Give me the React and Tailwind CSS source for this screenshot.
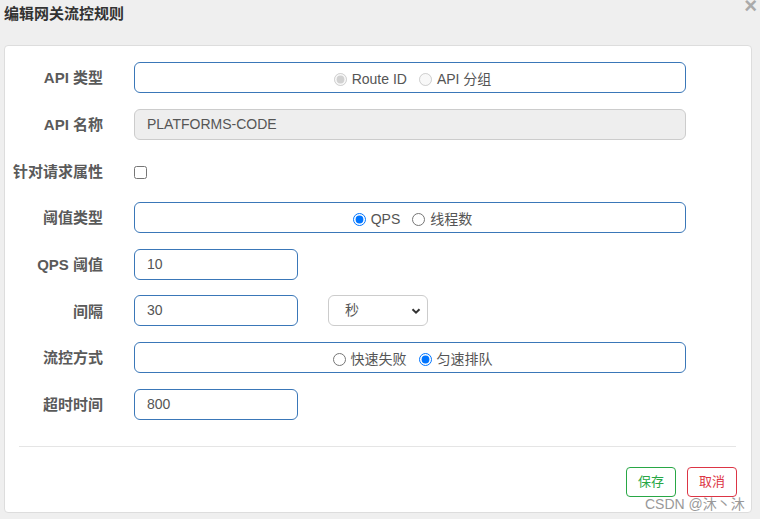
import React from "react";

const font = { fontFamily: '"Liberation Sans", "Noto Sans CJK SC", sans-serif' };

function Row({ label, children }) {
  return (
    <div className="flex h-[31px] items-center">
      <div className="w-[98px] shrink-0 pt-[2px] text-right text-[15px] font-bold text-[#5a5a5a]">{label}</div>
      <div className="ml-[31px] flex items-center">{children}</div>
    </div>
  );
}

function Radio({ checked, disabled, children }) {
  return (
    <label className="flex items-center text-[14px] text-[#555]">
      <input
        type="radio"
        className="mr-[5px] ml-[5px] h-[13px] w-[13px]"
        checked={checked}
        disabled={disabled}
        readOnly
      />
      {children}
    </label>
  );
}

function RadioBox({ children }) {
  return (
    <div className="flex h-[31px] w-[552px] items-center justify-center gap-[7px] rounded-md border border-[#3a77b8] bg-white pt-[4px]">
      {children}
    </div>
  );
}

function TextBox({ value, className = "w-[164px]" }) {
  return (
    <div className={`flex h-[31px] items-center rounded-md border border-[#3a77b8] bg-white pl-[12px] text-[14px] text-[#555] ${className}`}>
      {value}
    </div>
  );
}

export default function App() {
  return (
    <div className="relative h-[519px] w-[760px] overflow-hidden bg-[#efefef]" style={font}>
      <span className="absolute -top-[8px] right-[3px] text-[22px] leading-[28px] font-bold text-[#aaa]">×</span>

      <div className="h-[45px] pt-[3px] pl-[4px] text-[15px] font-bold text-[#333]">编辑网关流控规则</div>

      <div className="ml-[4px] mr-[8px] h-[468px] rounded border border-[#ddd] bg-white">
        <div className="flex flex-col gap-[15.7px] pt-[16px]">
          <Row label="API 类型">
            <RadioBox>
              <Radio checked disabled>Route ID</Radio>
              <Radio checked={false} disabled>API 分组</Radio>
            </RadioBox>
          </Row>
          <Row label="API 名称">
            <div className="flex h-[31px] w-[552px] items-center rounded-md border border-[#ccc] bg-[#eee] pl-[12px] text-[14px] text-[#555]">
              PLATFORMS-CODE
            </div>
          </Row>
          <Row label="针对请求属性">
            <input type="checkbox" className="mt-[3px] h-[13px] w-[13px]" readOnly />
          </Row>
          <Row label="阈值类型">
            <RadioBox>
              <Radio checked>QPS</Radio>
              <Radio checked={false}>线程数</Radio>
            </RadioBox>
          </Row>
          <Row label="QPS 阈值">
            <TextBox value="10" />
          </Row>
          <Row label="间隔">
            <TextBox value="30" />
            <div className="ml-[30px] flex h-[31px] w-[100px] items-center justify-between rounded-md border border-[#ccc] bg-white pl-[16px] pr-[6px] text-[14px] text-[#555]">
              <span>秒</span>
              <svg width="10" height="10" viewBox="0 0 10 10">
                <path d="M1.5 3.2 L5 6.7 L8.5 3.2" fill="none" stroke="#333" strokeWidth="2" />
              </svg>
            </div>
          </Row>
          <Row label="流控方式">
            <RadioBox>
              <Radio checked={false}>快速失败</Radio>
              <Radio checked>匀速排队</Radio>
            </RadioBox>
          </Row>
          <Row label="超时时间">
            <TextBox value="800" />
          </Row>
        </div>

        <div className="mt-[26px] ml-[14px] mr-[15px] border-t border-[#e5e5e5]" />

        <div className="mt-[20px] mr-[14px] flex justify-end gap-[11px]">
          <button className="h-[30px] w-[50px] rounded border border-[#28a745] text-[13px] text-[#28a745]">保存</button>
          <button className="h-[30px] w-[50px] rounded border border-[#dc3545] text-[13px] text-[#dc3545]">取消</button>
        </div>
      </div>

      <span className="absolute left-[645px] top-[494px] text-[14px] text-[#999]">CSDN @沐丶沐</span>
    </div>
  );
}
